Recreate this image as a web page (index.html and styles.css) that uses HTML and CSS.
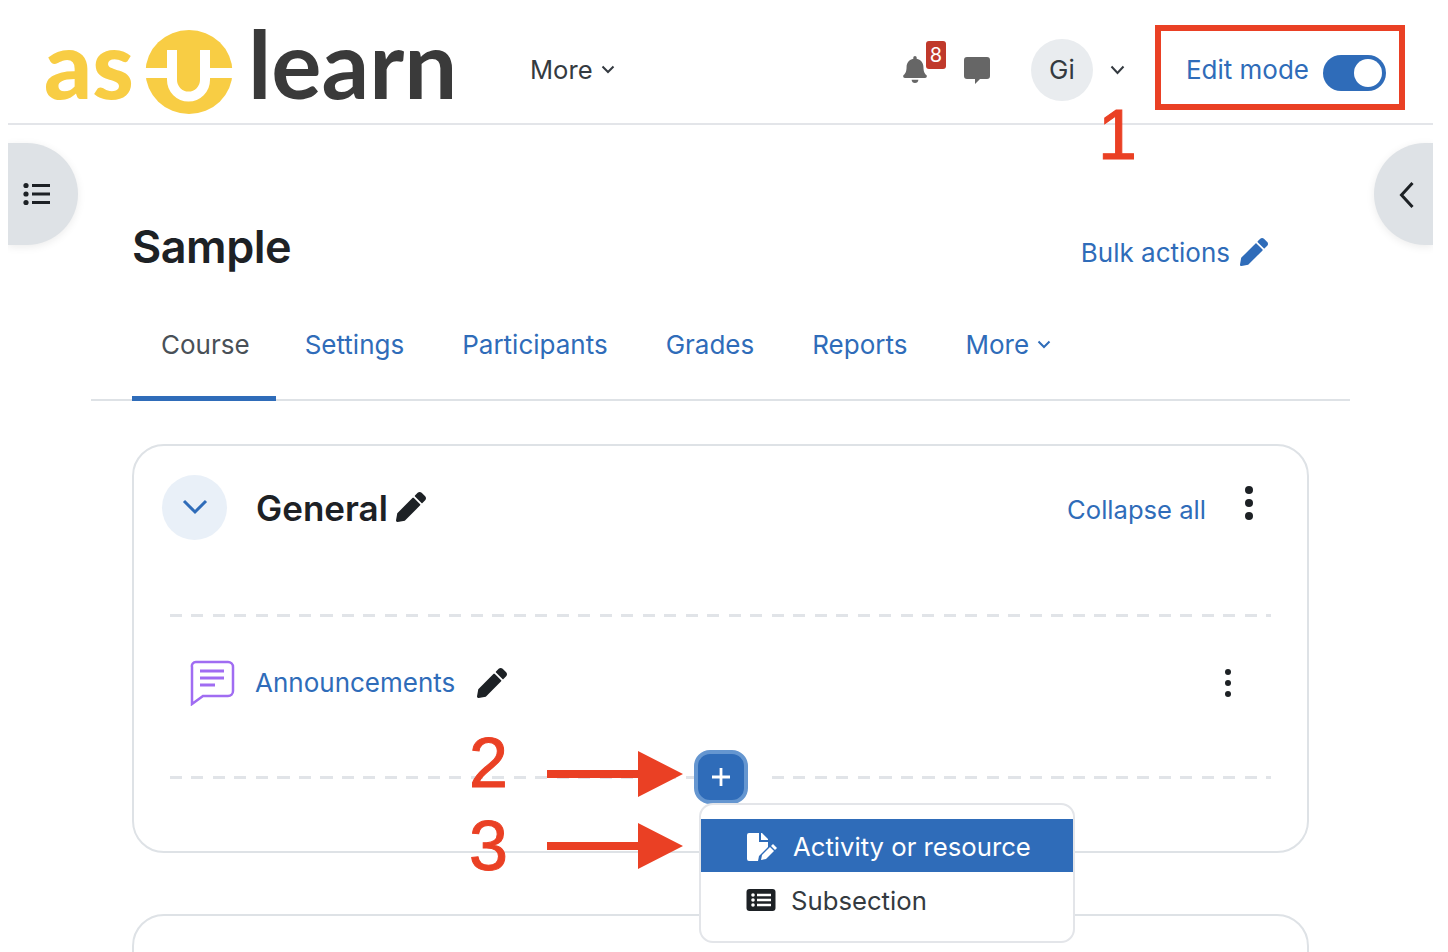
FILE: index.html
```html
<!DOCTYPE html>
<html lang="en">
<head>
    <meta charset="UTF-8">
    <title>Sample</title>
    <meta name="viewport" content="width=device-width, initial-scale=1.0">
    <link rel="stylesheet" href="styles.css">
</head>
<body>
<div class="page">
    <header class="topbar">
        <div class="logo">
            <span class="logo-as">as</span>
            <svg class="logo-u" width="88" height="84" viewBox="0 0 88 84">
                <ellipse cx="44" cy="42" rx="43.5" ry="42" fill="#f8cd44"/>
                <rect x="0" y="38" width="88" height="10" fill="#fff"/>
                <path d="M27 20v30a16.500 16.500 0 0 0 33 0V20" fill="#f8cd44" stroke="#fff" stroke-width="10"/>
            </svg>
            <span class="logo-learn">learn</span>
        </div>
        <a class="nav-more">More
            <svg width="14" height="9" viewBox="0 0 14 9"><path d="M1.5 1.5 7 7l5.5-5.5" fill="none" stroke="#343a40" stroke-width="2"/></svg>
        </a>
        <div class="usernav">
            <div class="bell">
                <svg width="26" height="27" viewBox="0 0 448 512"><path fill="#666" d="M224 512c35.32 0 63.97-28.65 63.97-64H160.03c0 35.35 28.65 64 63.97 64zm215.39-149.71c-19.32-20.76-55.47-51.99-55.47-154.29 0-77.7-54.48-139.9-127.94-155.16V32c0-17.67-14.32-32-31.98-32s-31.98 14.33-31.98 32v20.84C118.56 68.1 64.08 130.3 64.08 208c0 102.3-36.15 133.53-55.47 154.29-6 6.45-8.66 14.16-8.61 21.71.11 16.4 12.98 32 32.1 32h383.8c19.12 0 32-15.6 32.1-32 .05-7.55-2.61-15.27-8.61-21.71z"/></svg>
                <span class="badge">8</span>
            </div>
            <svg class="chat" width="28" height="28" viewBox="0 0 28 28"><path fill="#666" d="M4 1h20a3 3 0 0 1 3 3v16a3 3 0 0 1-3 3h-7l-5 5v-5H4a3 3 0 0 1-3-3V4a3 3 0 0 1 3-3z"/></svg>
            <div class="avatar">Gi</div>
            <svg class="user-caret" width="15" height="10" viewBox="0 0 15 10"><path d="M1.5 1.5 7.5 8l6-6.5" fill="none" stroke="#343a40" stroke-width="2"/></svg>
            <div class="editmode">
                <span>Edit mode</span>
                <span class="toggle"><span class="knob"></span></span>
            </div>
        </div>
    </header>

    <main class="main">
        <div class="title-row">
            <h1>Sample</h1>
            <a class="bulk">Bulk actions
                <svg width="28" height="28" viewBox="0 0 512 512"><path fill="#2f6cb9" d="M497.9 142.1l-46.1 46.1c-4.7 4.7-12.3 4.7-17 0l-111-111c-4.7-4.7-4.7-12.3 0-17l46.1-46.1c18.7-18.7 49.1-18.7 67.9 0l60.1 60.1c18.8 18.7 18.8 49.1 0 67.9zM284.2 99.8L21.6 362.4.4 483.9c-2.9 16.4 11.4 30.6 27.8 27.8l121.5-21.3 262.6-262.6c4.7-4.7 4.7-12.3 0-17l-111-111c-4.8-4.7-12.4-4.7-17.1 0z"/></svg>
            </a>
        </div>

        <nav class="tabs">
            <a class="tab active">Course</a>
            <a class="tab">Settings</a>
            <a class="tab">Participants</a>
            <a class="tab">Grades</a>
            <a class="tab">Reports</a>
            <a class="tab">More
                <svg width="14" height="9" viewBox="0 0 14 9"><path d="M1.5 1.5 7 7l5.5-5.5" fill="none" stroke="#2f6cb9" stroke-width="2"/></svg>
            </a>
        </nav>

        <section class="card">
            <div class="section-head">
                <div class="collapse-btn">
                    <svg width="26" height="16" viewBox="0 0 26 16"><path d="M2 2l11 11L24 2" fill="none" stroke="#2f6cb9" stroke-width="3"/></svg>
                </div>
                <h2>General</h2>
                <svg class="pencil-head" width="30" height="30" viewBox="0 0 512 512"><path fill="#1d2125" d="M497.9 142.1l-46.1 46.1c-4.7 4.7-12.3 4.7-17 0l-111-111c-4.7-4.7-4.7-12.3 0-17l46.1-46.1c18.7-18.7 49.1-18.7 67.9 0l60.1 60.1c18.8 18.7 18.8 49.1 0 67.9zM284.2 99.8L21.6 362.4.4 483.9c-2.9 16.4 11.4 30.6 27.8 27.8l121.5-21.3 262.6-262.6c4.7-4.7 4.7-12.3 0-17l-111-111c-4.8-4.7-12.4-4.7-17.1 0z"/></svg>
                <a class="collapse-all">Collapse all</a>
                <div class="dots dots-big"><i></i><i></i><i></i></div>
            </div>
            <div class="dash"></div>
            <div class="activity">
                <svg class="forum-icon" width="46" height="46" viewBox="0 0 46 46">
                    <path d="M7 2h32a5 5 0 0 1 5 5v24a5 5 0 0 1-5 5H14l-11 8V7a4 4 0 0 1 4-5z" fill="none" stroke="#a06cf2" stroke-width="2.500"/>
                    <path d="M11 11h24M11 18h24M11 25h15" stroke="#a06cf2" stroke-width="3"/>
                </svg>
                <a class="activity-name">Announcements</a>
                <svg width="30" height="30" viewBox="0 0 512 512"><path fill="#1d2125" d="M497.9 142.1l-46.1 46.1c-4.7 4.7-12.3 4.7-17 0l-111-111c-4.7-4.7-4.7-12.3 0-17l46.1-46.1c18.7-18.7 49.1-18.7 67.9 0l60.1 60.1c18.8 18.7 18.8 49.1 0 67.9zM284.2 99.8L21.6 362.4.4 483.9c-2.9 16.4 11.4 30.6 27.8 27.8l121.5-21.3 262.6-262.6c4.7-4.7 4.7-12.3 0-17l-111-111c-4.8-4.7-12.4-4.7-17.1 0z"/></svg>
                <div class="dots"><i></i><i></i><i></i></div>
            </div>
            <div class="add-row">
                <div class="dash dash-left"></div>
                <div class="plus-btn">
                    <svg width="22" height="22" viewBox="0 0 22 22"><path d="M11 2v18M2 11h18" stroke="#fff" stroke-width="2.800"/></svg>
                </div>
                <div class="dash dash-right"></div>
            </div>
        </section>
        <section class="card card-next"></section>
    </main>

    <button class="drawer drawer-left">
        <svg width="28" height="24" viewBox="0 0 28 24">
            <circle cx="3" cy="3.5" r="2.6" fill="#1d2125"/><circle cx="3" cy="12" r="2.6" fill="#1d2125"/><circle cx="3" cy="20.5" r="2.6" fill="#1d2125"/>
            <path d="M9 3.5h18M9 12h18M9 20.5h18" stroke="#1d2125" stroke-width="3"/>
        </svg>
    </button>
    <button class="drawer drawer-right">
        <svg width="16" height="28" viewBox="0 0 16 28"><path d="M13.500 2 2.500 14l11 12" fill="none" stroke="#1d2125" stroke-width="3"/></svg>
    </button>

    <div class="menu">
        <a class="menu-item selected">
            <svg width="32" height="30" viewBox="0 0 32 30">
                <path fill="#fff" d="M3 1h10v9h9v5L13 24l-1 5H3a2 2 0 0 1-2-2V3a2 2 0 0 1 2-2zM15 1h1l6 6v1h-7z"/>
                <path fill="#fff" d="M15 28l1-5 8-8 4 4-8 8zM25 14l2-2 4 4-2 2z"/>
            </svg>
            Activity or resource
        </a>
        <a class="menu-item">
            <svg width="30" height="24" viewBox="0 0 30 24">
                <rect x="0.500" y="1" width="29" height="22" rx="3" fill="#1d2125"/>
                <circle cx="7" cy="7" r="1.800" fill="#fff"/><circle cx="7" cy="12" r="1.800" fill="#fff"/><circle cx="7" cy="17" r="1.800" fill="#fff"/>
                <path d="M11 7h14M11 12h14M11 17h14" stroke="#fff" stroke-width="2.400"/>
            </svg>
            Subsection
        </a>
    </div>

    <!-- annotations -->
    <div class="mark-box"></div>
    <span class="mark-num num1">1</span>
    <span class="mark-num num2">2</span>
    <span class="mark-num num3">3</span>
    <svg class="arrow arrow2" width="136" height="46" viewBox="0 0 136 46"><path fill="#ea4024" d="M0 19h91V0l45 23-45 23V27H0z"/></svg>
    <svg class="arrow arrow3" width="136" height="46" viewBox="0 0 136 46"><path fill="#ea4024" d="M0 19h91V0l45 23-45 23V27H0z"/></svg>
</div>
</body>
</html>
```

FILE: styles.css
```css
* {
    box-sizing: border-box;
}
html, body {
    margin: 0;
    background: #ffffff;
}
body {
    font-family: Inter, "Liberation Sans", sans-serif;
    color: #1d2125;
}
.page {
    position: relative;
    width: 1425px;
    height: 952px;
    margin-left: 8px;
    overflow: hidden;
    background: #ffffff;
}

/* top bar */
.topbar {
    display: flex;
    align-items: center;
    height: 125px;
    padding: 16px 47px 0 36px;
    border-bottom: 2px solid #e3e5e9;
}
.logo {
    display: flex;
    align-items: center;
    width: 486px;
    height: 100px;
    font-family: Lato, sans-serif;
    font-size: 94px;
    font-weight: 700;
}
.logo-as {
    color: #f8cd44;
    width: 101px;
    font-weight: 900;
    line-height: 100px;
    margin-top: -14px;
}
.logo-u {
    flex: none;
    margin-top: 4px;
}
.logo-learn {
    color: #3a3a3a;
    margin-left: 15px;
    line-height: 100px;
    margin-top: -14px;
}
.nav-more {
    display: flex;
    align-items: center;
    gap: 8px;
    font-size: 25.6px;
    color: #343a40;
}
.usernav {
    display: flex;
    align-items: center;
    margin-left: auto;
}
.bell {
    position: relative;
    margin-right: 35px;
    height: 27px;
}
.badge {
    position: absolute;
    left: 24px;
    top: -15px;
    width: 20px;
    height: 28px;
    border-radius: 3px;
    background: #c0392b;
    color: #ffffff;
    font-size: 20px;
    line-height: 28px;
    text-align: center;
}
.chat {
    margin-right: 40px;
}
.avatar {
    width: 62px;
    height: 62px;
    border-radius: 50%;
    background: #e9ecef;
    color: #343a40;
    font-size: 26px;
    line-height: 62px;
    text-align: center;
    margin-right: 17px;
}
.user-caret {
    margin-right: 61px;
}
.editmode {
    display: flex;
    align-items: center;
    gap: 14px;
    font-size: 26px;
    color: #2f6cb9;
}
.toggle {
    display: block;
    width: 63px;
    height: 36px;
    margin-top: 6px;
    padding: 4px 4px 4px 31px;
    border-radius: 18px;
    background: #2f6cb9;
}
.knob {
    display: block;
    width: 28px;
    height: 28px;
    border-radius: 50%;
    background: #ffffff;
}

/* course content */
.main {
    padding-left: 124px;
}
.title-row {
    display: flex;
    align-items: center;
    justify-content: space-between;
    width: 1136px;
    height: 170px;
    padding-top: 72px;
}
h1 {
    margin: 0;
    font-size: 45px;
    font-weight: 600;
    letter-spacing: -0.5px;
}
.bulk {
    display: flex;
    align-items: center;
    gap: 10px;
    margin-top: 12px;
    font-size: 26px;
    color: #2f6cb9;
}
.tabs {
    display: flex;
    width: 1259px;
    height: 106px;
    margin-left: -41px;
    padding-left: 41px;
    border-bottom: 2px solid #dee2e6;
}
.tab {
    display: flex;
    align-items: center;
    gap: 8px;
    height: 106px;
    padding: 0 29px 2px;
    border-bottom: 5px solid transparent;
    font-size: 26px;
    color: #2f6cb9;
}
.tab.active {
    padding: 0 26px 2px 29px;
    color: #495057;
    border-bottom-color: #2f6cb9;
}
.card {
    position: relative;
    width: 1177px;
    height: 409px;
    margin-top: 43px;
    padding: 0 36px;
    border: 2px solid #dee2e6;
    border-radius: 32px;
}
.card-next {
    margin-top: 61px;
}
.section-head {
    display: flex;
    align-items: center;
    height: 122px;
    margin-left: -8px;
}
.collapse-btn {
    display: flex;
    align-items: center;
    justify-content: center;
    width: 65px;
    height: 65px;
    border-radius: 50%;
    background: #e9f0f8;
}
h2 {
    margin: 2px 8px 0 29px;
    font-size: 35px;
    font-weight: 600;
}
.collapse-all {
    margin: 5px 39px 0 auto;
    font-size: 25.6px;
    color: #2f6cb9;
}
.dots {
    display: flex;
    flex-direction: column;
    gap: 5px;
}
.dots i {
    display: block;
    width: 6px;
    height: 6px;
    border-radius: 50%;
    background: #1d2125;
}
.dots-big {
    margin-right: 18px;
    margin-top: -8px;
}
.dots-big i {
    width: 8px;
    height: 8px;
}
.dash {
    height: 3px;
    background: repeating-linear-gradient(to right, #e1e4e8 0 12px, transparent 12px 21.5px);
}
.section-head + .dash {
    margin-top: 46px;
}
.activity {
    display: flex;
    align-items: center;
    height: 133px;
    padding: 0 0 2px 19px;
}
.activity-name {
    margin: 0 22px 0 20px;
    font-size: 26px;
    color: #2f6cb9;
}
.activity .dots {
    margin-left: auto;
    margin-right: 40px;
}
.add-row {
    display: flex;
    align-items: center;
    height: 54px;
}
.dash-left {
    width: 524px;
}
.plus-btn {
    display: flex;
    align-items: center;
    justify-content: center;
    width: 54px;
    height: 54px;
    border: 4px solid #6596d0;
    border-radius: 16px;
    background: #2f6cb9;
}
.dash-right {
    flex: 1;
    margin-left: 24px;
}

/* side drawers */
.drawer {
    position: absolute;
    top: 143px;
    height: 102px;
    border: 0;
    padding: 0;
    background: #dee2e6;
    box-shadow: 0 2px 8px rgba(0, 0, 0, 0.08);
}
.drawer-left {
    left: 0;
    width: 70px;
    padding: 2px 12px 0 0;
    border-radius: 0 51px 51px 0;
}
.drawer-right {
    right: 0;
    width: 59px;
    padding: 5px 0 0 6px;
    border-radius: 51px 0 0 51px;
}

/* add menu */
.menu {
    position: absolute;
    left: 691px;
    top: 803px;
    width: 376px;
    height: 140px;
    padding-top: 14px;
    border: 2px solid #e3e5e9;
    border-radius: 14px;
    background: #ffffff;
}
.menu-item {
    display: flex;
    align-items: center;
    gap: 15px;
    height: 54px;
    padding: 2px 0 0 45px;
    font-size: 25.7px;
    color: #343a40;
}
.menu-item.selected {
    height: 53px;
    background: #2f6cb9;
    color: #ffffff;
}

/* annotations */
.mark-box {
    position: absolute;
    left: 1147px;
    top: 25px;
    width: 250px;
    height: 85px;
    border: 6px solid #ea4024;
}
.mark-num {
    position: absolute;
    font-family: "Liberation Sans", sans-serif;
    font-size: 70px;
    line-height: 70px;
    color: #ea4024;
    -webkit-text-stroke: 1px #ea4024;
}
.num1 {
    left: 1090px;
    top: 100px;
}
.num2 {
    left: 461px;
    top: 728px;
}
.num3 {
    left: 461px;
    top: 811px;
}
.arrow {
    position: absolute;
    left: 539px;
}
.arrow2 {
    top: 751px;
}
.arrow3 {
    top: 823px;
}
```
